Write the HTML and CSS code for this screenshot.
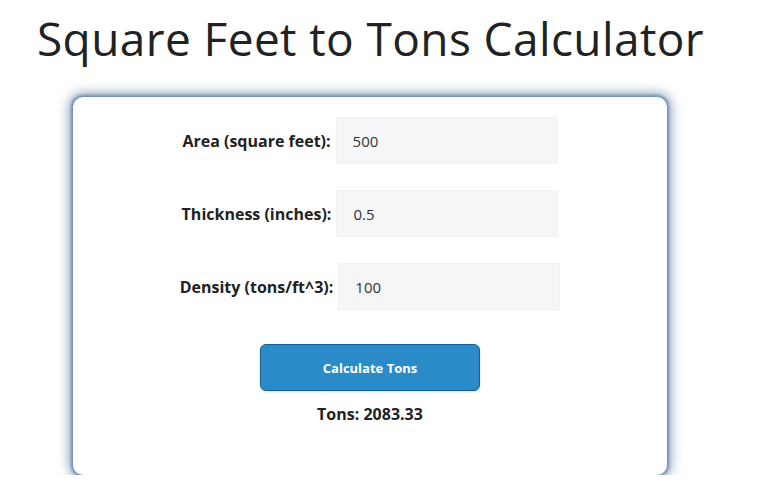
FILE: index.html
```html
<!DOCTYPE html>
<html lang="en">
<head>
  <meta charset="UTF-8" />
  <meta name="viewport" content="width=device-width, initial-scale=1.0">
  <title>Square Feet to Tons Calculator</title>
  <link rel="stylesheet" href="styles.css">
</head>
<body>
  <h1>Square Feet to Tons Calculator</h1>

  <div class="calculator">
    <div class="row">
      <label for="area">Area (square feet):</label>
      <input type="number" id="area" value="500">
    </div>
    <div class="row">
      <label for="thickness">Thickness (inches):</label>
      <input type="number" id="thickness" value="0.5">
    </div>
    <div class="row">
      <label for="density">Density (tons/ft^3):</label>
      <input type="number" id="density" value="100">
    </div>
    <button onclick="calculateTons()">Calculate Tons</button>
    <div id="result">Tons: 2083.33</div>
  </div>

  <script>
    function calculateTons() {
      const area = parseFloat(document.getElementById("area").value);
      const thickness = parseFloat(document.getElementById("thickness").value);
      const density = parseFloat(document.getElementById("density").value);
      const tons = area * (thickness / 12) * density;
      document.getElementById("result").textContent = "Tons: " + tons.toFixed(2);
    }
  </script>
</body>
</html>
```

FILE: styles.css
```css
body {
  margin: 0;
  font-family: "Open Sans", sans-serif;
  background-color: #fff;
  color: #222;
}
h1 {
  margin: 8px 0 0 37px;
  font-size: 46px;
  font-weight: 400;
  letter-spacing: 0.4px;
  line-height: 60px;
  color: #222;
}
.calculator {
  width: 594px;
  margin: 29px 0 0 73px;
  padding: 20px 0 50px;
  box-sizing: border-box;
  background-color: #fff;
  border-radius: 10px;
  box-shadow: 0 0 3px 2px rgba(70, 110, 155, 0.6), 0 0 12px 4px rgba(55, 95, 140, 0.55);
  text-align: center;
}
.row {
  display: flex;
  justify-content: center;
  align-items: center;
  gap: 5px;
  margin-bottom: 26px;
}
.row label {
  font-weight: bold;
  font-size: 16px;
  color: #222;
}
.row input {
  width: 222px;
  height: 47px;
  box-sizing: border-box;
  padding: 0 16px;
  border: 1px solid #f0f1f3;
  background-color: #f5f6f8;
  font-family: inherit;
  font-size: 15px;
  color: #333;
  outline: none;
}
button {
  width: 220px;
  height: 47px;
  margin-top: 8px;
  background-color: #2b8bc8;
  color: #fff;
  border: 1px solid #1b5d97;
  border-radius: 6px;
  font-family: inherit;
  font-size: 13px;
  font-weight: bold;
  cursor: pointer;
  box-shadow: 0 1px 3px rgba(0, 0, 0, 0.15);
}
#result {
  margin-top: 12px;
  font-size: 16px;
  font-weight: bold;
  color: #222;
}
```
